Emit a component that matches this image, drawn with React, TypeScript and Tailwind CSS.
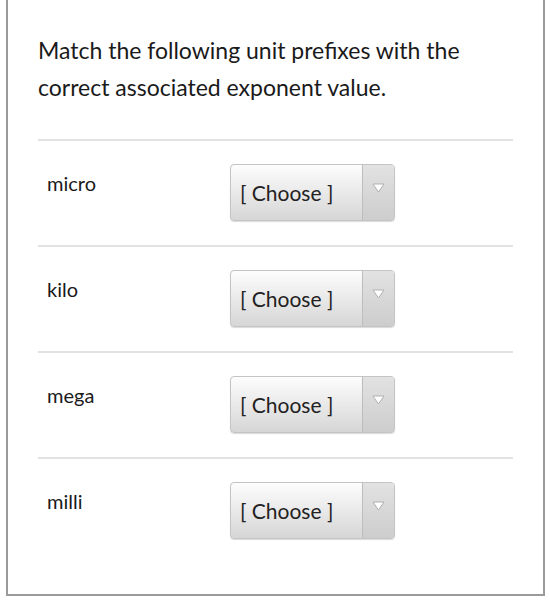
import React from "react";

const items = ["micro", "kilo", "mega", "milli"];

function Select() {
  return (
    <div className="flex h-[57px] w-[165px] overflow-hidden rounded-[4px] border border-[#c4c4c4] bg-gradient-to-b from-[#fdfdfd] to-[#d6d6d6] shadow-[0_1px_1px_rgba(0,0,0,0.15)]">
      <div className="flex flex-1 items-center pl-[9px] text-[21px] text-[#222]">[ Choose ]</div>
      <div className="flex w-[32px] items-start justify-center border-l border-[#bdbdbd] bg-gradient-to-b from-[#e2e2e2] to-[#cdcdcd] pt-[18px]">
        <svg width="13" height="10" viewBox="0 0 13 10">
          <path d="M1 1 L12 1 L6.5 9 Z" fill="#ffffff" stroke="#a9a9a9" strokeWidth="0.9" strokeLinejoin="round" />
        </svg>
      </div>
    </div>
  );
}

export default function App() {
  return (
    <div className="h-[600px] w-[550px] bg-white pl-[6px] pr-[5px]" style={{ fontFamily: "Lato, 'Liberation Sans', sans-serif" }}>
      <div className="h-[596px] border-x-2 border-b-2 border-[#9a9a9a] px-[30px]">
        <div className="pt-[32px] pb-[33px] text-[23px] leading-[37px] text-[#1a1a1a]">
          Match the following unit prefixes with the correct associated exponent value.
        </div>
        {items.map((it) => (
          <div key={it} className="flex border-t-2 border-[#e2e2e2] pt-[23px] pb-[24px]">
            <div className="w-[192px] pl-[9px] pt-[7px] text-[20px] leading-[24px] text-[#1a1a1a]">{it}</div>
            <Select />
          </div>
        ))}
      </div>
    </div>
  );
}
